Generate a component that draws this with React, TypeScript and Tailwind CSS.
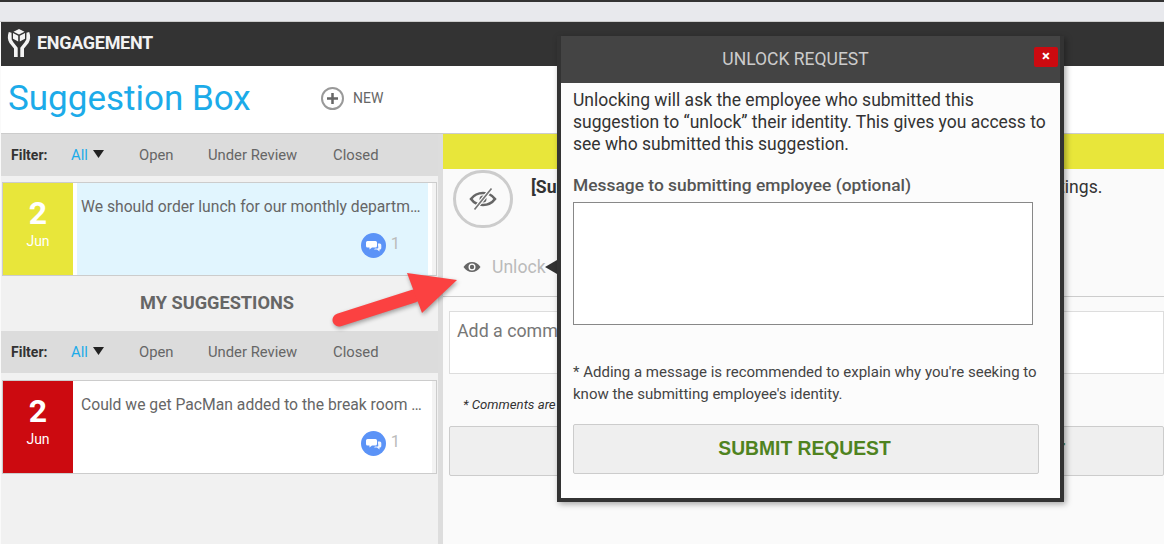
const Triangle = () => (
  <svg width="11" height="8" viewBox="0 0 11 8" className="ml-[5px] mb-[2px]">
    <path d="M0 0h11L5.500 8z" fill="#222" />
  </svg>
)

function FilterBar() {
  return (
    <div className="h-[42px] bg-[#dcdcdc] flex items-center pl-[10px] text-[14.800px] text-[#666] shrink-0">
      <span className="font-bold text-[#333] text-[14px] w-[60px]">Filter:</span>
      <span className="text-[#1cabe9] w-[17px]">All</span>
      <Triangle />
      <span className="ml-[35px] w-[69px]">Open</span>
      <span className="w-[125px]">Under Review</span>
      <span>Closed</span>
    </div>
  )
}

const CommentBadge = () => (
  <div className="flex items-start">
    <div className="w-[25px] h-[25px] rounded-full bg-[#5b93f7] flex items-center justify-center">
      <svg width="25" height="25" viewBox="0 0 25 25">
        <path d="M6.500 8h8a1.500 1.500 0 0 1 1.500 1.500v3.500a1.500 1.500 0 0 1-1.500 1.500H11l-2.500 2v-2h-2A1.500 1.500 0 0 1 5 13V9.500A1.500 1.500 0 0 1 6.500 8z" fill="#fff" />
        <path d="M16.800 10.500h2a1.500 1.500 0 0 1 1.500 1.500v3a1.500 1.500 0 0 1-1.500 1.500H18.500v2l-2.500-2h-3l1-1h2.500a1 1 0 0 0 .8-1z" fill="#f2f6fe" />
      </svg>
    </div>
    <span className="ml-[5px] text-[16.500px] leading-[22px] text-[#bbb]">1</span>
  </div>
)

function SuggestionCard({ color, bg, text, mt }: { color: string; bg: string; text: string; mt: string }) {
  return (
    <div className={`${mt} mx-[1px] h-[94px] border border-[#ccc] bg-white flex shrink-0`}>
      <div className={`w-[70px] ${color} text-white flex flex-col items-center pt-[12px] shrink-0`}>
        <span className="text-[32px] leading-[36px] font-bold">2</span>
        <span className="text-[14px] leading-[20px]">Jun</span>
      </div>
      <div className={`ml-[4px] ${bg} w-[351px] pl-[4px] pt-[13px] flex flex-col shrink-0`}>
        <p className="text-[15.700px] leading-[22px] text-[#666] whitespace-nowrap">{text}</p>
        <div className="flex justify-end pr-[28px] mt-[15px]">
          <CommentBadge />
        </div>
      </div>
      <div className="ml-[4px] flex-1 bg-[#f3f3f3]" />
    </div>
  )
}

function Logo() {
  return (
    <svg width="24" height="28" viewBox="0 0 24 28" fill="none">
      <path d="M12 0l5.500 2.800L12 5.600 6.500 2.800z" fill="#f4f4f4" />
      <path d="M6 4l5.200 2.700v5.800L6 9.800zM18 4l-5.200 2.700v5.800L18 9.800z" fill="#f4f4f4" />
      <path d="M1.800 3C.3 7 .6 11 2.500 14l4.500 5.500V28h3.700v-9.200L6.500 13.500 4.700 10.500 4.500 3.800zM22.200 3c1.500 4 1.200 8-.7 11L17 19.500V28h-3.700v-9.200l4.200-5.300 1.800-3 .2-6.700z" fill="#f4f4f4" />
    </svg>
  )
}

function UnlockModal() {
  return (
    <div className="absolute left-[557px] top-[36px] w-[507px] h-[466px] bg-[#fcfcfc] border-[4px] border-t-0 border-[#333] shadow-[2px_2px_6px_rgba(0,0,0,0.35)] flex flex-col">
      <div className="h-[47px] bg-[#444] flex items-center justify-center relative text-[#ccc] text-[17.500px] pr-[30px] shrink-0">
        UNLOCK REQUEST
        <div className="absolute left-[473px] top-[11px] w-[24px] h-[20px] bg-[#cc0a10] rounded-[2px] flex items-center justify-center text-white text-[15px] font-bold leading-none pb-[2px]">
          ×
        </div>
      </div>
      <div className="pl-[12px] flex flex-col items-start">
        <p className="mt-[6px] w-[480px] text-[17.500px] leading-[22px] text-[#333]">
          Unlocking will ask the employee who submitted this suggestion to “unlock” their identity. This gives you access to see who submitted this suggestion.
        </p>
        <p className="mt-[19px] text-[17.400px] leading-[22px] font-medium text-[#555]">Message to submitting employee (optional)</p>
        <div className="mt-[6px] w-[460px] h-[123px] border border-[#888] bg-white shrink-0" />
        <p className="mt-[36px] w-[470px] text-[15px] leading-[22px] text-[#444]">
          * Adding a message is recommended to explain why you're seeking to know the submitting employee's identity.
        </p>
        <div className="mt-[19px] w-[466px] h-[50px] bg-[#efefef] border border-[#ccc] rounded-[2px] flex items-center justify-center pr-[3px] font-['Liberation_Sans'] font-bold text-[19.300px] text-[#4f831f]">
          SUBMIT REQUEST
        </div>
      </div>
    </div>
  )
}

export default function App() {
  return (
    <div className="relative w-[1164px] h-[544px] overflow-hidden bg-[#fafafa] font-['Roboto',sans-serif] flex flex-col">
      <div className="h-[2px] bg-[#333] shrink-0" />
      <div className="h-[20px] bg-[#e8e9ed] border-b border-[#ccc] shrink-0" />
      <div className="h-[44px] ml-[1px] bg-[#333] flex items-center pl-[6px] pb-[3px] shrink-0">
        <Logo />
        <span className="ml-[6px] text-[#f2f2f2] font-bold text-[18px] tracking-[-0.3px]">ENGAGEMENT</span>
      </div>
      <div className="h-[68px] ml-[1px] bg-white border-b border-[#ccc] flex items-center pl-[7px] shrink-0">
        <h1 className="text-[35px] text-[#1cabe9] w-[313px]">Suggestion Box</h1>
        <div className="w-[23px] h-[23px] rounded-full border-2 border-[#999] flex items-center justify-center mb-[2px]">
          <svg width="13" height="13" viewBox="0 0 13 13"><path d="M6.500 1v11M1 6.500h11" stroke="#666" strokeWidth="2.500" /></svg>
        </div>
        <span className="ml-[9px] text-[14px] text-[#666] mb-[2px]">NEW</span>
      </div>
      <div className="flex flex-1 ml-[1px] min-h-0">
        <div className="w-[437px] bg-[#f1f1f1] flex flex-col shrink-0">
          <FilterBar />
          <SuggestionCard color="bg-[#e8e63a]" bg="bg-[#e1f5fe]" mt="mt-[6px]" text="We should order lunch for our monthly departm…" />
          <div className="h-[55px] flex items-center justify-center pb-[2px] pr-[5px] text-[18.200px] font-bold text-[#666] shrink-0">MY SUGGESTIONS</div>
          <FilterBar />
          <SuggestionCard color="bg-[#cc0a10]" bg="bg-white" mt="mt-[7px]" text="Could we get PacMan added to the break room …" />
        </div>
        <div className="w-[5px] bg-[#ddd] shrink-0" />
        <div className="flex-1 flex flex-col min-w-0">
          <div className="h-[35px] bg-[#e8e63a] shrink-0" />
          <div className="flex h-[92px] pl-[10px] pt-[1px] shrink-0">
            <div className="w-[60px] h-[58px] rounded-full border-[3px] border-[#ccc] flex items-center justify-center shrink-0">
              <svg width="28" height="24" viewBox="0 0 28 24" fill="none">
                <path d="M2 12c3-4 7-6 12-6s9 2 12 6c-3 4-7 6-12 6S5 16 2 12z" stroke="#666" strokeWidth="2.600" />
                <circle cx="14" cy="12" r="3.500" fill="#666" />
                <path d="M22.500 1.500 5.500 22.500" stroke="#fff" strokeWidth="4" />
                <path d="M22.500 1.500 5.500 22.500" stroke="#777" strokeWidth="1.800" />
              </svg>
            </div>
            <p className="ml-[18px] mt-[6px] text-[17.600px] leading-[22px] whitespace-nowrap text-[#333]">
              <span className="font-bold">[Submitted]</span> We should order lunch for our monthly department meetings.
            </p>
          </div>
          <div className="h-[41px] border-b border-[#ccc] flex items-start pl-[20px] shrink-0 -mt-[5px]">
            <svg width="18" height="12" viewBox="0 0 18 12" className="mt-[5px]">
              <path d="M.5 6C3 2.500 5.500 1 9 1s6 1.500 8.500 5C15 9.500 12.500 11 9 11S3 9.500.5 6z" fill="#666" />
              <circle cx="9" cy="6" r="3.500" fill="#fff" />
              <circle cx="9" cy="6" r="2.200" fill="#666" />
            </svg>
            <span className="ml-[11px] text-[#bbb] text-[17.600px] leading-[22px]">Unlock</span>
          </div>
          <div className="mt-[14px] ml-[6px] h-[63px] bg-white border border-[#ddd] pl-[7px] pt-[7px] text-[#777] text-[17.800px] leading-[24px] shrink-0">
            Add a comment
          </div>
          <p className="mt-[22px] ml-[20px] text-[13.200px] italic text-[#333] leading-[18px] shrink-0">* Comments are anonymous</p>
          <div className="mt-[12px] ml-[6px] h-[50px] bg-[#efefef] border border-[#ccc] rounded-[2px] flex items-center justify-end pr-[98px] font-['Liberation_Sans'] font-bold text-[19.300px] text-[#4f831f] shrink-0">
            SUBMIT COMMENT
          </div>
        </div>
      </div>
      <svg className="absolute left-[325px] top-[265px] drop-shadow-[1px_2px_2px_rgba(0,0,0,0.35)]" width="140" height="65" viewBox="0 0 140 65">
        <path d="M14 55 89 31" stroke="#fb4141" strokeWidth="13" strokeLinecap="round" />
        <path d="M82 8 132 15 97 48z" fill="#fb4141" />
      </svg>
      <svg className="absolute left-[545px] top-[260px]" width="12" height="14" viewBox="0 0 12 14"><path d="M0 7 12 0v14z" fill="#333" /></svg>
      <UnlockModal />
    </div>
  )
}
